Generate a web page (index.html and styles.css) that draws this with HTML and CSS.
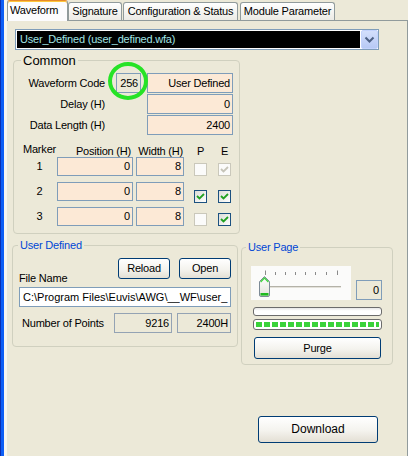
FILE: index.html
```html
<!DOCTYPE html>
<html>
<head>
<meta charset="utf-8">
<title>Waveform</title>
<link rel="stylesheet" href="styles.css">
</head>
<body>
<div class="window">
  <div class="frame-edge"></div>
  <div class="frame-light"></div>
  <div class="main">
    <div class="tabs">
      <div class="tab active">Waveform</div>
      <div class="tab t-sig">Signature</div>
      <div class="tab t-cfg">Configuration &amp; Status</div>
      <div class="tab t-mod">Module Parameter</div>
    </div>
    <div class="panel">
      <div class="combo">
        <div class="combo-text">User_Defined (user_defined.wfa)</div>
        <div class="combo-btn">
          <svg width="15" height="17" viewBox="0 0 15 17"><polyline points="3.5,6.5 7.5,10.5 11.5,6.5" fill="none" stroke="#4d6185" stroke-width="2"/></svg>
        </div>
      </div>

      <fieldset class="group common">
        <legend>Common</legend>
        <div class="params">
          <div class="plabel">Waveform Code</div>
          <div class="field plain code">256</div>
          <div class="field c3">User Defined</div>
          <div class="plabel">Delay (H)</div>
          <div class="field c3">0</div>
          <div class="plabel">Data Length (H)</div>
          <div class="field c3">2400</div>
        </div>

        <div class="mhead">
          <div class="mh-name">Marker</div>
          <div class="mh-pos">Position (H)</div>
          <div class="mh-wid">Width (H)</div>
          <div class="mh-cb">P</div>
          <div class="mh-cb">E</div>
        </div>
        <div class="mgrid">
          <div class="mnum">1</div>
          <div class="field mfield">0</div>
          <div class="field mfield mwid">8</div>
          <span class="cb dis"></span>
          <span class="cb dis"><svg width="11" height="11" viewBox="0 0 11 11"><polyline points="2,5 4.5,7.5 9,3" fill="none" stroke="#c6c4b8" stroke-width="1.8"/></svg></span>

          <div class="mnum">2</div>
          <div class="field mfield">0</div>
          <div class="field mfield mwid">8</div>
          <span class="cb low"><svg width="11" height="11" viewBox="0 0 11 11"><polyline points="2,5 4.5,7.5 9,3" fill="none" stroke="#21a121" stroke-width="1.8"/></svg></span>
          <span class="cb low"><svg width="11" height="11" viewBox="0 0 11 11"><polyline points="2,5 4.5,7.5 9,3" fill="none" stroke="#21a121" stroke-width="1.8"/></svg></span>

          <div class="mnum">3</div>
          <div class="field mfield">0</div>
          <div class="field mfield mwid">8</div>
          <span class="cb dis"></span>
          <span class="cb"><svg width="11" height="11" viewBox="0 0 11 11"><polyline points="2,5 4.5,7.5 9,3" fill="none" stroke="#21a121" stroke-width="1.8"/></svg></span>
        </div>
      </fieldset>

      <div class="cols">
        <fieldset class="group userdef">
          <legend>User Defined</legend>
          <div class="filehead">
            <div class="flabel">File Name</div>
            <div class="btn">Reload</div>
            <div class="btn open">Open</div>
          </div>
          <div class="filebox">C:\Program Files\Euvis\AWG\__WF\user_</div>
          <div class="points">
            <div class="ptlabel">Number of Points</div>
            <div class="pbox pb1">9216</div>
            <div class="pbox pb2">2400H</div>
          </div>
        </fieldset>

        <fieldset class="group userpage">
          <legend>User Page</legend>
          <div class="sliderrow">
            <div class="slider">
              <svg width="100" height="34" viewBox="0 0 100 34">
                <defs>
                  <linearGradient id="thumbfill" x1="0" y1="0" x2="0" y2="1">
                    <stop offset="0" stop-color="#ffffff"/>
                    <stop offset="1" stop-color="#e2e2da"/>
                  </linearGradient>
                </defs>
                <g stroke="#8a8a8a" stroke-width="1">
                  <line x1="14.5" y1="4.5" x2="14.5" y2="9"/>
                  <line x1="24.5" y1="6" x2="24.5" y2="9"/>
                  <line x1="34.5" y1="6" x2="34.5" y2="9"/>
                  <line x1="44.5" y1="6" x2="44.5" y2="9"/>
                  <line x1="54.5" y1="6" x2="54.5" y2="9"/>
                  <line x1="64.5" y1="6" x2="64.5" y2="9"/>
                  <line x1="75.5" y1="6" x2="75.5" y2="9"/>
                  <line x1="86.5" y1="4.5" x2="86.5" y2="9"/>
                </g>
                <line x1="14" y1="20.5" x2="90" y2="20.5" stroke="#b4b2a8"/>
                <line x1="14" y1="21.5" x2="90" y2="21.5" stroke="#e4e2da"/>
                <path d="M8.5,15.5 L13.5,10.5 L18.5,15.5 V29 Q18.5,30.5 17,30.5 H10 Q8.5,30.5 8.5,29 Z" fill="url(#thumbfill)" stroke="#7d8b97"/>
                <polyline points="9.6,16 13.5,12 17.4,16" fill="none" stroke="#3ed23e" stroke-width="1.3"/>
                <rect x="9.5" y="27" width="8" height="2.6" fill="#1fb91f"/>
              </svg>
            </div>
            <div class="valbox">0</div>
          </div>
          <div class="prog"></div>
          <div class="prog prog2"><div class="fill"></div></div>
          <div class="btn purge">Purge</div>
        </fieldset>
      </div>

      <div class="btn download">Download</div>
    </div>
  </div>
</div>
<div class="mark-circle"></div>
</body>
</html>
```

FILE: styles.css
```css
* {
  box-sizing: border-box;
}

html,
body {
  margin: 0;
  height: 100%;
}

body {
  position: relative;
  overflow: hidden;
  background: #ece9d8;
  color: #000;
  font-family: "Liberation Sans", Arial, sans-serif;
  font-size: 11px;
  letter-spacing: -0.2px;
}

.window {
  display: flex;
  height: 456px;
}

.frame-edge {
  width: 4px;
  background: linear-gradient(90deg, #0a2fb4 0 1px, #0d5ef5 1px 4px);
}

.frame-light {
  width: 3px;
  background: #f7f6f0;
}

.main {
  width: 401px;
  display: flex;
  flex-direction: column;
}

/* ---------- tabs ---------- */
.tabs {
  display: flex;
  align-items: flex-end;
  height: 21px;
  border-bottom: 1px solid #919b9c;
}

.tab {
  height: 18px;
  padding-top: 2px;
  border: 1px solid #919b9c;
  border-bottom: none;
  border-radius: 3px 3px 0 0;
  background: linear-gradient(#ffffff, #ecebe5);
  line-height: 13px;
  text-align: center;
  white-space: nowrap;
}

.tab.active {
  width: 61px;
  height: 21px;
  margin-bottom: -1px;
  padding: 3px 0 0 2px;
  text-align: left;
  background: #fcfcfe;
  border-top: 1px solid #e68b2c;
  box-shadow: inset 0 1px 0 #ffc73c;
}

.t-sig {
  width: 54px;
}

.t-cfg {
  width: 115px;
  margin-left: 1px;
}

.t-mod {
  width: 95px;
  margin-left: 2px;
}

/* ---------- panel ---------- */
.panel {
  flex: 1;
  padding-top: 8px;
  border-right: 1px solid #919b9c;
}

.combo {
  display: flex;
  width: 364px;
  height: 21px;
  margin-left: 8px;
  padding-left: 1px;
  border: 1px solid #7f9db9;
  background: #fff;
}

.combo-text {
  flex: 1;
  margin: 1px 1px 1px 0;
  padding-left: 3px;
  background: #000;
  color: #a2e4e4;
  line-height: 17px;
  white-space: nowrap;
}

.combo-btn {
  width: 17px;
  height: 19px;
  border: 1px solid #c3d3fd;
  border-radius: 2px;
  background: linear-gradient(#d3dffc, #b7c9f5);
}

.combo-btn svg {
  display: block;
}

/* ---------- group boxes ---------- */
.group {
  margin: 0;
  padding: 0;
  min-width: 0;
  border: 1px solid #d0d0bf;
  border-radius: 4px;
}

.group legend {
  padding: 0 2px;
  color: #0046d5;
  font-size: 11px;
  line-height: 13px;
}

.common {
  width: 227px;
  margin: 3px 0 0 6px;
  padding: 5px 0 7px;
}

.common legend {
  margin-left: 7px;
  color: #000;
  font-size: 13px;
  line-height: 15px;
  letter-spacing: 0;
}

.params {
  display: grid;
  grid-template-columns: 102px 31px 86px;
  grid-auto-rows: 20px;
  row-gap: 1px;
}

.plabel {
  grid-column: 1;
  align-self: center;
  padding-right: 11px;
  line-height: 13px;
  text-align: right;
  white-space: nowrap;
}

.field {
  height: 20px;
  padding-right: 2px;
  border: 1px solid #7f9db9;
  background: #fce9d6;
  line-height: 18px;
  text-align: right;
  white-space: nowrap;
  overflow: hidden;
}

.field.plain {
  background: #ece9d8;
}

.code {
  width: 25px;
}

.c3 {
  grid-column: 3;
}

.mhead,
.mgrid {
  display: grid;
  grid-template-columns: 35px 76px 51px 23px 24px;
  margin-left: 8px;
}

.mhead {
  height: 14px;
  margin-top: 8px;
  line-height: 13px;
}

.mh-name {
  text-align: center;
}

.mh-pos {
  padding: 2px 2px 0 0;
  text-align: right;
}

.mh-wid {
  padding: 2px 1px 0 0;
  text-align: right;
}

.mh-cb {
  justify-self: end;
  width: 13px;
  padding-top: 2px;
  text-align: center;
}

.mgrid {
  grid-auto-rows: 19px;
  row-gap: 6px;
}

.mnum {
  align-self: center;
  line-height: 13px;
  text-align: center;
}

.mfield {
  height: 19px;
  line-height: 17px;
}

.mwid {
  justify-self: end;
  width: 48px;
}

.cb {
  display: block;
  justify-self: end;
  align-self: end;
  width: 13px;
  height: 13px;
  border: 1px solid #1c5180;
  background: linear-gradient(135deg, #dcdcd7, #ffffff);
}

.cb svg {
  display: block;
}

.cb.dis {
  border-color: #cac8bb;
  background: #fbfbfa;
}

.cb.low {
  margin-bottom: -2px;
}

/* ---------- lower columns ---------- */
.cols {
  display: flex;
  align-items: flex-start;
  margin-top: 5px;
}

.userdef {
  width: 226px;
  margin-left: 5px;
  padding: 6px 0 13px;
}

.userdef legend {
  margin-left: 5px;
}

.filehead {
  display: flex;
  height: 27px;
}

.flabel {
  align-self: flex-end;
  width: 99px;
  margin-left: 6px;
  line-height: 13px;
}

.btn {
  height: 21px;
  width: 52px;
  border: 1px solid #003c74;
  border-radius: 3px;
  background: linear-gradient(#ffffff, #f4f3ee 55%, #e3dfd4);
  line-height: 19px;
  text-align: center;
  white-space: nowrap;
}

.open {
  margin-left: 9px;
}

.filebox {
  width: 212px;
  height: 20px;
  margin: 2px 0 0 6px;
  padding-left: 3px;
  border: 1px solid #7f9db9;
  background: #fff;
  line-height: 18px;
  letter-spacing: 0;
  white-space: nowrap;
  overflow: hidden;
}

.points {
  display: flex;
  align-items: center;
  height: 20px;
  margin-top: 6px;
}

.ptlabel {
  width: 92px;
  margin-left: 9px;
  white-space: nowrap;
}

.pbox {
  height: 20px;
  padding-right: 2px;
  border: 1px solid #94a3b4;
  background: #ece9d8;
  line-height: 18px;
  text-align: right;
}

.pb1 {
  width: 58px;
}

.pb2 {
  width: 54px;
  margin-left: 5px;
}

.userpage {
  width: 152px;
  margin: 2px 0 0 3px;
  padding: 12px 0 5px;
}

.userpage legend {
  margin-left: 4px;
}

.sliderrow {
  display: flex;
  align-items: flex-end;
  margin-left: 9px;
}

.slider {
  width: 100px;
  height: 34px;
  background: #fbfbfa;
}

.slider svg {
  display: block;
}

.valbox {
  width: 26px;
  height: 20px;
  margin-left: 5px;
  padding-right: 2px;
  border: 1px solid #7f9db9;
  background: #ece9d8;
  line-height: 18px;
  text-align: right;
}

.prog {
  width: 129px;
  height: 9px;
  margin: 7px 0 0 11px;
  border: 1px solid #6c6c6c;
  border-radius: 3px;
  background: linear-gradient(#e6e6e6, #ffffff 40%);
}

.prog2 {
  height: 11px;
  margin-top: 3px;
  padding: 2px;
  background: #fff;
}

.prog2 .fill {
  height: 100%;
  background: repeating-linear-gradient(90deg, #3ad23a 0 6px, transparent 6px 8px);
}

.purge {
  width: 127px;
  height: 22px;
  margin: 7px 0 0 12px;
  line-height: 20px;
}

.download {
  width: 120px;
  height: 27px;
  margin: 51px 0 0 251px;
  font-size: 12px;
  letter-spacing: 0;
  line-height: 25px;
}

/* annotation overlay */
.mark-circle {
  position: absolute;
  left: 108px;
  top: 62px;
  width: 40px;
  height: 38px;
  border: 4px solid #26e326;
  border-radius: 50%;
}
```
